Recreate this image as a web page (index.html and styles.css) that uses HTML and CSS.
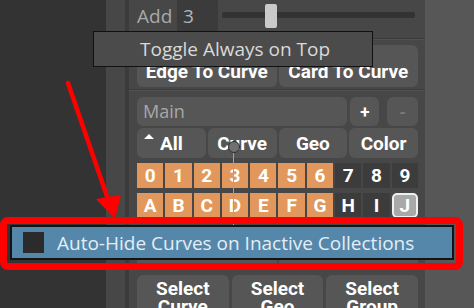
FILE: index.html
```html
<!DOCTYPE html>
<html lang="en">
<head>
    <meta charset="UTF-8">
    <meta name="viewport" content="width=device-width, initial-scale=1.0">
    <title>Curve Collections</title>
    <link rel="stylesheet" href="styles.css">
</head>
<body>
    <div class="desk"></div>
    <div class="dock-strip"></div>
    <main class="panel">
        <div class="add-row">
            <span class="add-label">Add</span>
            <span class="add-field">3</span>
            <div class="slider">
                <div class="slider-track"></div>
                <div class="slider-handle"></div>
            </div>
        </div>
        <div class="sep"></div>
        <div class="btn-row two edge">
            <button class="btn">Edge To Curve</button>
            <button class="btn">Card To Curve</button>
        </div>
        <div class="sep"></div>
        <div class="main-row">
            <div class="name-field">Main</div>
            <button class="btn small">+</button>
            <button class="btn small dim">-</button>
        </div>
        <div class="btn-row four">
            <button class="btn tab"><span class="caret"></span>All</button>
            <button class="btn tab">Curve</button>
            <button class="btn tab">Geo</button>
            <button class="btn tab">Color</button>
        </div>
        <div class="grid" id="grid"></div>
        <div class="btn-row two covered">
            <button class="btn">Show All</button>
            <button class="btn">Hide All</button>
        </div>
        <div class="btn-row three">
            <button class="btn tall">Select<br>Curve</button>
            <button class="btn tall">Select<br>Geo</button>
            <button class="btn tall">Select<br>Group</button>
        </div>
    </main>
    <div class="side"></div>

    <!-- overlays -->
    <div class="tooltip">Toggle Always on Top</div>

    <div class="pin-line"></div>
    <div class="pin-dot"></div>

    <div class="highlight">
        <div class="menu-item">
            <span class="check"></span>
            <span>Auto-Hide Curves on Inactive Collections</span>
        </div>
    </div>

    <svg class="arrow" width="140" height="230" viewBox="0 0 140 230">
        <line x1="68" y1="83" x2="110" y2="205" stroke="#ff0000" stroke-width="4.5" stroke-linecap="round"/>
        <polygon points="115,219 96,199 121,195" fill="#ff0000"/>
    </svg>

    <script>
        const grid = document.getElementById('grid');
        const cells = [
            '0', '1', '2', '3', '4', '5', '6', '7', '8', '9',
            'A', 'B', 'C', 'D', 'E', 'F', 'G', 'H', 'I', 'J'
        ];
        const used = ['0', '1', '2', '3', '4', '5', '6', 'A', 'B', 'C', 'D', 'E', 'F', 'G'];

        cells.forEach((label) => {
            const cell = document.createElement('div');
            cell.className = 'cell';
            if (used.includes(label)) cell.classList.add('used');
            if (label === 'J') cell.classList.add('active');
            cell.textContent = label;
            grid.appendChild(cell);
        });
    </script>
</body>
</html>
```

FILE: styles.css
```css
body {
    margin: 0;
    width: 474px;
    height: 308px;
    overflow: hidden;
    display: flex;
    background-color: #333333;
    font-family: Roboto, "Liberation Sans", sans-serif;
    position: relative;
}
.desk {
    width: 106px;
    background-color: #333333;
}
.dock-strip {
    width: 19px;
    background-color: #474747;
    border-right: 4px solid #3b3b3b;
}
.panel {
    width: 281px;
    height: 308px;
    overflow: hidden;
    padding: 0 7px 0 8px;
    background-color: #474747;
    display: flex;
    flex-direction: column;
}
.panel > * {
    flex-shrink: 0;
}
.side {
    flex: 1;
    background-color: #575757;
}
.add-row {
    height: 36px;
    display: flex;
    align-items: flex-start;
}
.add-label {
    font-family: "Open Sans", "Noto Sans", sans-serif;
    font-size: 19px;
    color: #a9a9a9;
    line-height: 32px;
    width: 40px;
}
.add-field {
    width: 35px;
    height: 32px;
    padding-left: 6px;
    background-color: #3b3b3b;
    font-family: "Open Sans", "Noto Sans", sans-serif;
    font-size: 19px;
    color: #b5b5b5;
    line-height: 32px;
}
.slider {
    flex: 1;
    position: relative;
    height: 32px;
    margin-left: 4px;
}
.slider-track {
    margin-top: 12px;
    height: 6px;
    margin-right: 3px;
    background-color: #333333;
    border-radius: 2px;
}
.slider-handle {
    position: absolute;
    left: 43px;
    top: 4px;
    width: 12px;
    height: 24px;
    background-color: #cacaca;
    border-radius: 2px;
}
.sep {
    height: 1px;
    background-color: #3a3a3a;
    border-bottom: 1px solid #525252;
    margin: 2px -7px 3px -8px;
}
.btn-row {
    display: grid;
    gap: 2px;
    margin-top: 2px;
}
.btn-row.two {
    grid-template-columns: 1fr 1fr;
}
.btn-row.four {
    grid-template-columns: repeat(4, 1fr);
}
.btn-row.three {
    grid-template-columns: repeat(3, 1fr);
    gap: 3px;
    margin-top: 6px;
}
.btn {
    border: none;
    margin: 0;
    padding: 0;
    background-color: #565656;
    color: #ffffff;
    font-family: Roboto, "Liberation Sans", sans-serif;
    font-weight: bold;
    font-size: 19px;
    border-radius: 6px;
    height: 42px;
    padding-top: 10px;
    position: relative;
}
.btn.tab {
    height: 30px;
    padding-top: 0;
}
.btn.tall {
    height: 50px;
    line-height: 18px;
    align-self: start;
    display: flex;
    flex-direction: column;
    justify-content: flex-start;
    align-items: center;
    padding-top: 5px;
}
.caret {
    position: absolute;
    left: 7px;
    top: 6px;
    width: 0;
    height: 0;
    border-left: 5px solid transparent;
    border-right: 5px solid transparent;
    border-bottom: 5px solid #ffffff;
}
.main-row {
    display: flex;
    gap: 3px;
    margin-top: 3px;
}
.name-field {
    width: 206px;
    height: 29px;
    padding-left: 6px;
    background-color: #565656;
    border-radius: 6px;
    font-family: "Open Sans", "Noto Sans", sans-serif;
    font-size: 18px;
    color: #a8a8a8;
    line-height: 29px;
}
.btn.small {
    width: 29px;
    height: 29px;
    padding-top: 0;
    font-size: 17px;
}
.btn.dim {
    color: #7a7a7a;
    width: 31px;
    margin-left: 5px;
}
.grid {
    margin-top: 5px;
    display: grid;
    grid-template-columns: repeat(10, 1fr);
    grid-auto-rows: 25px;
    column-gap: 2px;
    row-gap: 5px;
}
.cell {
    background-color: #3c3c3c;
    color: #ffffff;
    font-weight: bold;
    font-size: 19px;
    display: flex;
    align-items: center;
    justify-content: center;
}
.cell.used {
    background-color: #e2985c;
}
.cell.active {
    background-color: #a9a9a9;
    border: 2px solid #f0f0f0;
    border-radius: 5px;
    box-sizing: border-box;
}
.covered {
    margin-top: 9px;
}
.tooltip {
    position: absolute;
    left: 93px;
    top: 31px;
    width: 280px;
    height: 36px;
    box-sizing: border-box;
    border: 1px solid #111111;
    background-color: #4b4b4b;
    color: #d9d9d9;
    font-family: "Open Sans", "Noto Sans", sans-serif;
    font-size: 19px;
    line-height: 34px;
    padding-left: 46px;
}
.pin-line {
    position: absolute;
    left: 233px;
    top: 150px;
    width: 1px;
    height: 76px;
    background-color: #93a6b6;
}
.pin-dot {
    position: absolute;
    left: 228px;
    top: 141px;
    width: 10px;
    height: 10px;
    border-radius: 50%;
    background-color: #707070;
    border: 1px solid #2e2e2e;
}
.highlight {
    position: absolute;
    left: 0;
    top: 217px;
    width: 449px;
    height: 39px;
    border: 7px solid #ff0000;
    border-radius: 8px;
}
.menu-item {
    margin: 1px 0 0 3px;
    height: 35px;
    width: 444px;
    box-sizing: border-box;
    border: 2px solid #141414;
    background-color: #5587ab;
    display: flex;
    align-items: center;
    gap: 13px;
    padding-left: 11px;
    font-family: "Open Sans", "Noto Sans", sans-serif;
    font-size: 19px;
    color: #e4edf4;
}
.check {
    width: 21px;
    height: 21px;
    background-color: #2b2b2b;
}
.arrow {
    position: absolute;
    left: 0;
    top: 0;
}
```
